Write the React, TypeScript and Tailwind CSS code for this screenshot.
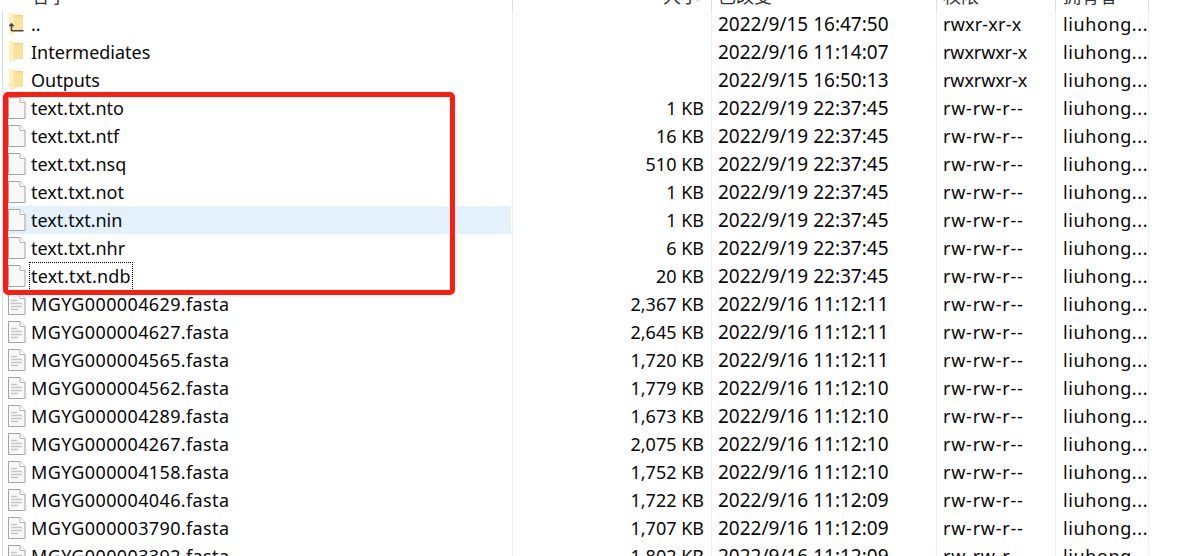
const folders = [
  { name: "..", date: "2022/9/15 16:47:50", perm: "rwxr-xr-x", up: true },
  { name: "Intermediates", date: "2022/9/16 11:14:07", perm: "rwxrwxr-x" },
  { name: "Outputs", date: "2022/9/15 16:50:13", perm: "rwxrwxr-x" },
];
const blanks = [
  ["text.txt.nto", "1 KB"],
  ["text.txt.ntf", "16 KB"],
  ["text.txt.nsq", "510 KB"],
  ["text.txt.not", "1 KB"],
  ["text.txt.nin", "1 KB"],
  ["text.txt.nhr", "6 KB"],
  ["text.txt.ndb", "20 KB"],
];
const fastas = [
  ["MGYG000004629.fasta", "2,367 KB", "2022/9/16 11:12:11"],
  ["MGYG000004627.fasta", "2,645 KB", "2022/9/16 11:12:11"],
  ["MGYG000004565.fasta", "1,720 KB", "2022/9/16 11:12:11"],
  ["MGYG000004562.fasta", "1,779 KB", "2022/9/16 11:12:10"],
  ["MGYG000004289.fasta", "1,673 KB", "2022/9/16 11:12:10"],
  ["MGYG000004267.fasta", "2,075 KB", "2022/9/16 11:12:10"],
  ["MGYG000004158.fasta", "1,752 KB", "2022/9/16 11:12:10"],
  ["MGYG000004046.fasta", "1,722 KB", "2022/9/16 11:12:09"],
  ["MGYG000003790.fasta", "1,707 KB", "2022/9/16 11:12:09"],
  ["MGYG000003392.fasta", "1,802 KB", "2022/9/16 11:12:09"],
];

function Folder({ up }: { up?: boolean }) {
  return (
    <svg width="15" height="22" viewBox="0 0 15 22" className="ml-[1px] shrink-0">
      <path d="M0 .5H5L6 2H14V18H6V19L1 21.500L0 20z" fill="#fbe29b" />
      <path d="M0 .5H5V19L1 21.500L0 20z" fill="#fff0bd" />
      <path d="M5 2H14V3.500H5z" fill="#f4d27a" />
      {up && <path d="M2.500 18V11M.4 13.200 2.500 11l2.200 2.200M2.500 17.800H14.500" stroke="#46464a" strokeWidth="1.600" fill="none" />}
    </svg>
  );
}

function Doc({ lines }: { lines?: boolean }) {
  return (
    <svg width="18" height="22" viewBox="0 0 18 22" className="shrink-0">
      <path d="M.5.500h11.500l5 5v16H.5z" fill="#f8f8f8" stroke="#a3a3a3" />
      <path d="M12 .500v5h5" fill="#fff" stroke="#b5b5b5" />
      {lines && <path d="M3 7.500h6M3 10.500h11M3 13.500h11M3 16.500h7" stroke="#c6c6c6" strokeWidth="1.600" />}
    </svg>
  );
}

const permClass: Record<string, string> = {
  "rwxr-xr-x": "tracking-[0.2px]",
  "rwxrwxr-x": "tracking-[-0.1px]",
  "rw-rw-r--": "tracking-[0.75px]",
};

function Row({
  icon, name, size, date, perm, hover, focus, wide,
}: {
  icon: React.ReactNode; name: string; size?: string; date: string; perm: string; hover?: boolean; focus?: boolean; wide?: boolean;
}) {
  return (
    <div className="flex h-[28px] w-[1147px] border-l border-[#cfe3f8]">
      <div className="flex h-full w-[510px] shrink-0 border-r border-[#e8f1fb] pr-[1px]">
        <div className={`flex h-full flex-1 items-center pl-[5px] ${hover ? "bg-[#e3f1fc]" : ""}`}>
          <span className="flex w-[23px] shrink-0">{icon}</span>
          <span className={`h-[25px] leading-[24px] ${wide ? "tracking-[0.37px]" : ""} ${focus ? "tracking-[0.17px] outline-1 outline-offset-[1px] outline-dotted outline-black" : ""}`}>{name}</span>
        </div>
      </div>
      <div className="w-[199px] shrink-0 border-r border-[#e8f1fb] pr-[7px] text-right leading-[28px]">{size}</div>
      <div className="w-[225px] shrink-0 border-r border-[#e8f1fb] pl-[6px] text-[19px] leading-[28px]">{date}</div>
      <div className={`w-[119px] shrink-0 border-r border-[#e8f1fb] pl-[6px] leading-[28px] ${permClass[perm]}`}>{perm}</div>
      <div className="w-[93px] shrink-0 border-r border-[#e8f1fb] pl-[7px] leading-[28px] tracking-[0.6px]">liuhong...</div>
    </div>
  );
}

function Header() {
  return (
    <div className="flex h-[10px] w-[1147px] items-end overflow-hidden pl-[1px] leading-[28px] text-[#333]">
      <div className="h-[28px] w-[510px] shrink-0 border-r border-[#dddddd] pl-[28px]">名字</div>
      <div className="h-[28px] w-[199px] shrink-0 border-r border-[#dddddd] pr-[12px] text-right">大小</div>
      <div className="h-[28px] w-[225px] shrink-0 border-r border-[#dddddd] pl-[6px]">已改变</div>
      <div className="h-[28px] w-[119px] shrink-0 border-r border-[#dddddd] pl-[6px]">权限</div>
      <div className="h-[28px] w-[93px] shrink-0 border-r border-[#dddddd] pl-[7px]">拥有者</div>
    </div>
  );
}

export default function App() {
  return (
    <div className="relative h-[556px] w-[1182px] overflow-hidden bg-white pl-[2px] text-[18px] text-[#080808] [font-family:'Noto_Sans','Noto_Sans_CJK_SC',sans-serif]">
      <Header />
      {folders.map((f) => (
        <Row key={f.name} icon={<Folder up={f.up} />} name={f.name} date={f.date} perm={f.perm} />
      ))}
      {blanks.map(([n, s], i) => (
        <Row key={n} icon={<Doc />} name={n} size={s} date="2022/9/19 22:37:45" perm="rw-rw-r--" hover={i === 4} focus={i === 6} />
      ))}
      {fastas.map(([n, s, d]) => (
        <Row key={n} icon={<Doc lines />} name={n} size={s} date={d} perm="rw-rw-r--" wide />
      ))}
      <div className="absolute top-[92px] left-[3px] h-[203px] w-[452px] rounded-[5px] border-[5px] border-[#fb1d10]" />
    </div>
  );
}
